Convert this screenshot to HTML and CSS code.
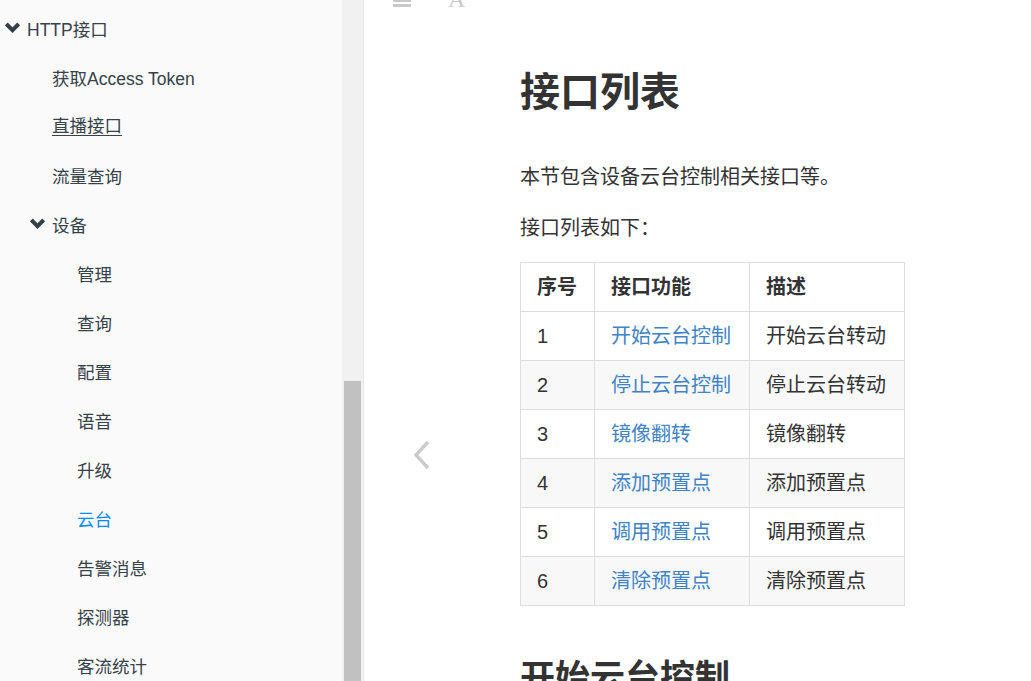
FILE: index.html
```html
<!DOCTYPE html>
<html lang="zh-CN">
<head>
<meta charset="utf-8">
<title>接口列表</title>
<link rel="stylesheet" href="styles.css">
</head>
<body>
<div class="book">
  <aside class="summary">
    <nav class="summary-list">
      <ul class="tree">
        <li><a class="item lv1" href="#"><svg class="chev" viewBox="0 0 15 11" width="15" height="11"><path d="M1.3 2 L7.5 8.2 L13.7 2" /></svg>HTTP接口</a>
          <ul class="tree">
            <li><a class="item lv2" href="#">获取Access Token</a></li>
            <li><a class="item lv2 hover" href="#">直播接口</a></li>
            <li><a class="item lv2" href="#">流量查询</a></li>
            <li><a class="item lv2" href="#"><svg class="chev" viewBox="0 0 15 11" width="15" height="11"><path d="M1.3 2 L7.5 8.2 L13.7 2" /></svg>设备</a>
              <ul class="tree">
                <li><a class="item lv3" href="#">管理</a></li>
                <li><a class="item lv3" href="#">查询</a></li>
                <li><a class="item lv3" href="#">配置</a></li>
                <li><a class="item lv3" href="#">语音</a></li>
                <li><a class="item lv3" href="#">升级</a></li>
                <li><a class="item lv3 active" href="#">云台</a></li>
                <li><a class="item lv3" href="#">告警消息</a></li>
                <li><a class="item lv3" href="#">探测器</a></li>
                <li><a class="item lv3" href="#">客流统计</a></li>
              </ul>
            </li>
          </ul>
        </li>
      </ul>
    </nav>
    <div class="scrollbar"><div class="thumb"></div></div>
  </aside>
  <main class="body">
    <div class="header">
      <span class="ico-menu"><i></i><i></i><i></i></span>
      <span class="ico-font">A</span>
    </div>
    <a class="nav-prev" href="#" aria-label="上一页"><svg viewBox="0 0 20 30" width="20" height="30"><polyline points="16,2 4,15 16,28" /></svg></a>
    <section class="page-inner">
      <h1 class="title">接口列表</h1>
      <p class="para">本节包含设备云台控制相关接口等。</p>
      <p class="para">接口列表如下：</p>
      <table class="api-table">
        <colgroup><col class="c1"><col class="c2"><col class="c3"></colgroup>
        <thead>
          <tr><th>序号</th><th>接口功能</th><th>描述</th></tr>
        </thead>
        <tbody>
          <tr><td>1</td><td><a href="#">开始云台控制</a></td><td>开始云台转动</td></tr>
          <tr><td>2</td><td><a href="#">停止云台控制</a></td><td>停止云台转动</td></tr>
          <tr><td>3</td><td><a href="#">镜像翻转</a></td><td>镜像翻转</td></tr>
          <tr><td>4</td><td><a href="#">添加预置点</a></td><td>添加预置点</td></tr>
          <tr><td>5</td><td><a href="#">调用预置点</a></td><td>调用预置点</td></tr>
          <tr><td>6</td><td><a href="#">清除预置点</a></td><td>清除预置点</td></tr>
        </tbody>
      </table>
      <h2 class="subtitle">开始云台控制</h2>
    </section>
  </main>
</div>
</body>
</html>
```
FILE: styles.css
```css
* { box-sizing: border-box; }
html, body {
  margin: 0;
  padding: 0;
  height: 681px;
  overflow: hidden;
  background: #fff;
  font-family: "Liberation Sans", "Noto Sans CJK SC", sans-serif;
  color: #333;
}
.book {
  display: flex;
  height: 681px;
}
.summary {
  display: flex;
  flex: 0 0 364px;
  height: 681px;
  background: #fafafa;
  border-right: 1px solid #e8e8e8;
}
.summary-list {
  width: 342px;
  padding-top: 3.5px;
}
.tree {
  list-style: none;
  margin: 0;
  padding: 0;
}
.item {
  display: flex;
  align-items: center;
  height: 49px;
  font-size: 17.5px;
  color: #364149;
  text-decoration: none;
  white-space: nowrap;
}
.lv1 { padding-left: 27px; }
.lv2 { padding-left: 52px; }
.lv3 { padding-left: 77px; }
.item.hover {
  display: block;
  line-height: 49px;
  text-decoration: underline;
  text-underline-offset: 3px;
}
.item.active { color: #008cff; }
.chev {
  flex: 0 0 15px;
  margin-left: -22px;
  margin-right: 7px;
  margin-top: -1px;
}
.chev path {
  fill: none;
  stroke: #33404a;
  stroke-width: 4;
  stroke-linejoin: miter;
}
.scrollbar {
  width: 21px;
  padding: 381px 2px 0;
  background: #f1f1f1;
  display: flex;
  flex-direction: column;
}
.thumb {
  flex: 1;
  background: #c1c1c1;
}
.body {
  position: relative;
  flex: 1;
  height: 681px;
  background: #fff;
}
.header {
  display: flex;
  align-items: flex-end;
  height: 8px;
  overflow: hidden;
  padding-left: 29px;
}
.ico-menu {
  display: flex;
  flex-direction: column;
  gap: 2px;
  width: 18px;
  margin-bottom: 1.5px;
}
.ico-menu i {
  display: block;
  height: 2.5px;
  background: #c8c8c8;
}
.ico-font {
  margin-left: 37px;
  margin-bottom: -3px;
  font-family: "Liberation Serif", serif;
  font-size: 24px;
  line-height: 24px;
  height: 24px;
  color: #c8c8c8;
}
.nav-prev {
  position: absolute;
  left: 48px;
  top: 440px;
}
.nav-prev polyline {
  fill: none;
  stroke: #cccccc;
  stroke-width: 3.5;
}
.page-inner {
  padding-left: 156px;
}
.title {
  margin: 60px 0 0;
  font-size: 40px;
  line-height: 48px;
  font-weight: 700;
  color: #333;
}
.para {
  margin: 0 0 17px;
  font-size: 20px;
  line-height: 34px;
}
.title + .para { margin-top: 44px; }
.api-table {
  border-collapse: collapse;
  table-layout: fixed;
  width: 384px;
  font-size: 20px;
  line-height: 34px;
  margin: 0;
}
.c1 { width: 74px; }
.c2 { width: 155px; }
.c3 { width: 155px; }
.api-table th, .api-table td {
  border: 1px solid #ddd;
  padding: 7px 16px;
  text-align: left;
  white-space: nowrap;
}
.api-table th { font-weight: 700; background: #fff; }
.api-table tbody tr:nth-child(odd) { background: #fff; }
.api-table tbody tr:nth-child(even) { background: #f8f8f8; }
.api-table a {
  color: #4183c4;
  text-decoration: none;
}
.subtitle {
  margin: 51px 0 0;
  font-size: 35px;
  line-height: 42px;
  font-weight: 700;
  color: #333;
}
```
